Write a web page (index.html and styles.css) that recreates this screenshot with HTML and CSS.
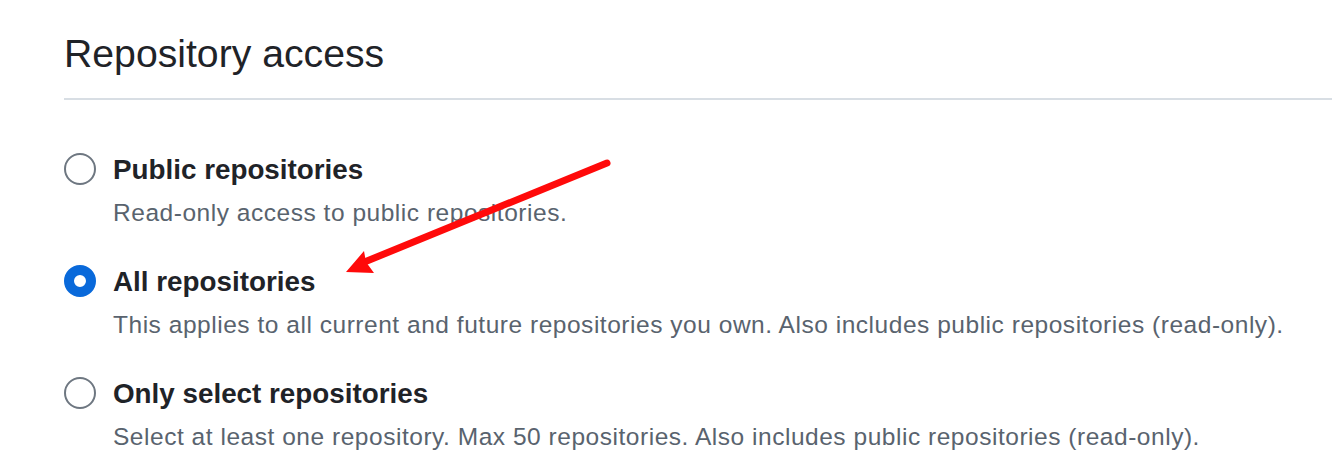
FILE: index.html
```html
<!DOCTYPE html>
<html lang="en">
<head>
<meta charset="utf-8">
<title>Repository access</title>
<link rel="stylesheet" href="styles.css">
</head>
<body>
<main class="page">
  <h2 class="title">Repository access</h2>
  <div class="options">
    <label class="option">
      <span class="radio"></span>
      <span class="text">
        <span class="label">Public repositories</span>
        <span class="desc">Read-only access to public repositories.</span>
      </span>
    </label>
    <label class="option">
      <span class="radio checked"></span>
      <span class="text">
        <span class="label">All repositories</span>
        <span class="desc">This applies to all current and future repositories you own. Also includes public repositories (read-only).</span>
      </span>
    </label>
    <label class="option">
      <span class="radio"></span>
      <span class="text">
        <span class="label">Only select repositories</span>
        <span class="desc">Select at least one repository. Max 50 repositories. Also includes public repositories (read-only).</span>
      </span>
    </label>
  </div>
  <svg class="arrow" width="1332" height="472" viewBox="0 0 1332 472" aria-hidden="true">
    <line x1="607" y1="163" x2="362" y2="263" stroke="#ff0a0a" stroke-width="7" stroke-linecap="round"/>
    <polygon points="346,272 364,251 366,262 374,273" fill="#ff0a0a"/>
  </svg>
</main>
</body>
</html>
```

FILE: styles.css
```css
* { box-sizing: border-box; }
html, body {
  margin: 0;
  padding: 0;
  background: #ffffff;
}
body {
  font-family: "Liberation Sans", Arial, sans-serif;
  color: #1f2328;
}
.page {
  position: relative;
  width: 1332px;
  height: 472px;
  padding-left: 64px;
  overflow: hidden;
}
.title {
  margin: 30px 0 0 0;
  font-size: 39.2px;
  line-height: 48px;
  font-weight: 400;
  color: #1f2328;
  padding-bottom: 20px;
  border-bottom: 2px solid #d8dee4;
}
.options {
  display: flex;
  flex-direction: column;
  gap: 34px;
  padding-top: 52px;
}
.option {
  display: flex;
  align-items: flex-start;
  gap: 17px;
}
.radio {
  flex: none;
  width: 32px;
  height: 32px;
  margin-top: 1px;
  border-radius: 50%;
  border: 2px solid #6e7781;
  background: #fff;
}
.radio.checked {
  border: 10px solid #0969da;
}
.text {
  display: flex;
  flex-direction: column;
  gap: 8px;
}
.label {
  font-size: 27.8px;
  line-height: 36px;
  font-weight: 700;
  color: #1f2328;
}
.desc {
  font-size: 24.5px;
  line-height: 34px;
  color: #59636e;
  letter-spacing: 0.53px;
}
.arrow {
  position: absolute;
  left: 0;
  top: 0;
  pointer-events: none;
}
```
